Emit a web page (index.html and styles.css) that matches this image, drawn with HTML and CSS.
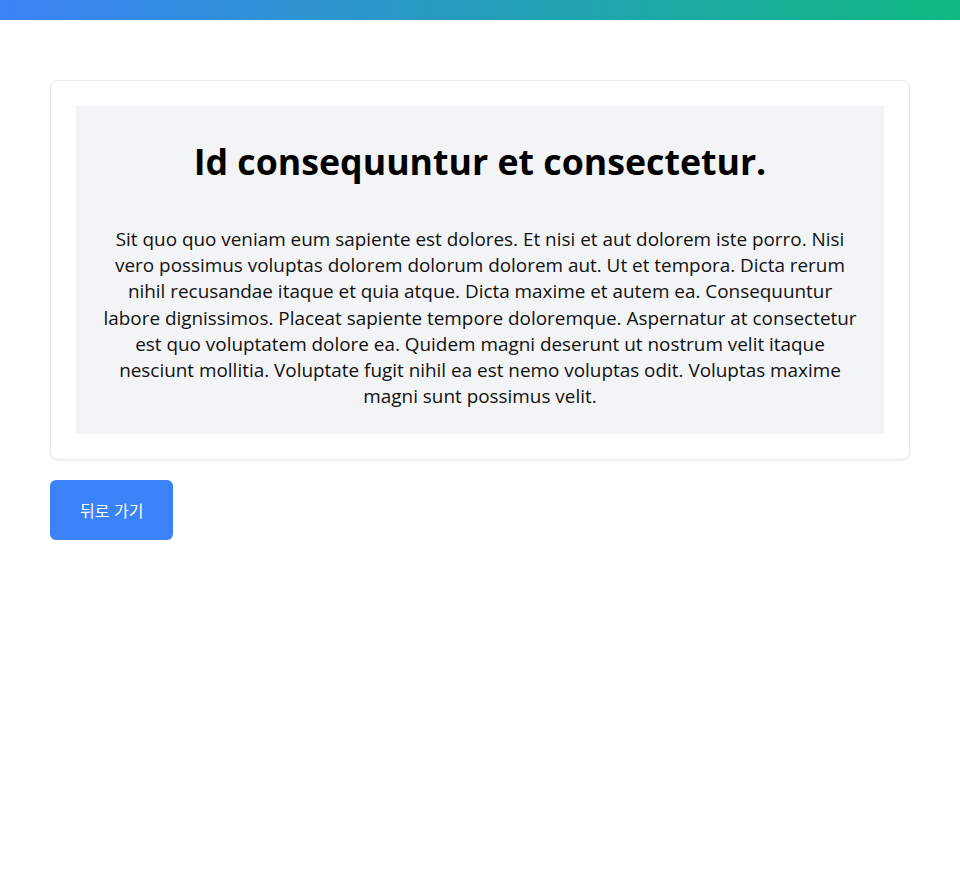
FILE: index.html
```html
<!DOCTYPE html>
<html lang="ko">
<head>
<meta charset="utf-8">
<title>Detail</title>
<link rel="stylesheet" href="styles.css">
</head>
<body>
<div class="topbar"></div>
<main class="page">
  <section class="card">
    <div class="card-inner">
      <h1 class="title">Id consequuntur et consectetur.</h1>
      <p class="body-text">Sit quo quo veniam eum sapiente est dolores. Et nisi et aut dolorem iste porro. Nisi vero possimus voluptas dolorem dolorum dolorem aut. Ut et tempora. Dicta rerum nihil recusandae itaque et quia atque. Dicta maxime et autem ea. Consequuntur labore dignissimos. Placeat sapiente tempore doloremque. Aspernatur at consectetur est quo voluptatem dolore ea. Quidem magni deserunt ut nostrum velit itaque nesciunt mollitia. Voluptate fugit nihil ea est nemo voluptas odit. Voluptas maxime magni sunt possimus velit.</p>
    </div>
  </section>
  <button class="back-btn" type="button">뒤로 가기</button>
</main>
</body>
</html>
```

FILE: styles.css
```css
html, body {
  margin: 0;
  padding: 0;
  background: #ffffff;
}
body {
  font-family: "Open Sans", "Noto Sans CJK KR", sans-serif;
  color: #111111;
}
.topbar {
  height: 20px;
  background: linear-gradient(90deg, #3b82f6 0%, #10b981 100%);
}
.page {
  padding: 60px 50px 0;
}
.card {
  background: #ffffff;
  border: 1px solid #e9eaec;
  border-radius: 8px;
  box-shadow: 0 1px 3px rgba(0, 0, 0, 0.05);
  padding: 25px;
}
.card-inner {
  background: #f3f4f6;
  padding: 25px 25px 25px;
  text-align: center;
}
.title {
  margin: 6px 0 0;
  font-size: 35.7px;
  line-height: 48px;
  font-weight: 700;
  color: #000000;
}
.body-text {
  margin: 41px 0 0;
  font-size: 18.9px;
  line-height: 26.17px;
  color: #111111;
}
.back-btn {
  margin-top: 20px;
  display: inline-block;
  background: #3b82f6;
  color: #ffffff;
  border: none;
  border-radius: 6px;
  padding: 20px 30px;
  font-family: "Noto Sans CJK KR", "Open Sans", sans-serif;
  font-size: 16px;
  line-height: 20px;
  cursor: pointer;
}
```
